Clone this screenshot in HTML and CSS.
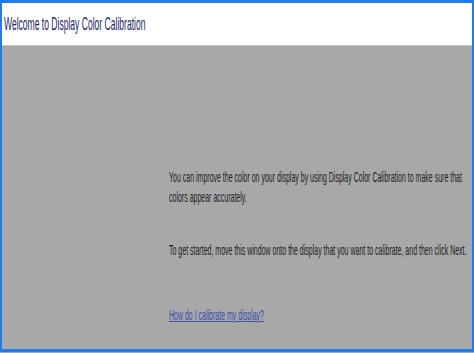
FILE: index.html
```html
<!DOCTYPE html>
<html>
<head>
<meta charset="utf-8">
<link rel="stylesheet" href="styles.css">
</head>
<body>
<div class="window">
  <div class="header">
    <div class="title">Welcome to Display Color Calibration</div>
  </div>
  <div class="content">
    <div class="para">
      <div class="line">You can improve the color on your display by using Display Color Calibration to make sure that</div>
      <div class="line">colors appear accurately.</div>
    </div>
    <div class="para second">
      <div class="line">To get started, move this window onto the display that you want to calibrate, and then click Next.</div>
    </div>
    <div class="para help">
      <a class="line link" href="#">How do I calibrate my display?</a>
    </div>
  </div>
</div>
</body>
</html>
```
FILE: styles.css
```css
html, body {
  margin: 0;
  padding: 0;
  background: #a8a8a8;
  overflow: hidden;
}
body {
  width: 474px;
  height: 353px;
  font-family: "Liberation Sans", Arial, sans-serif;
}
.window {
  width: 470px;
  height: 346px;
  border-style: solid;
  border-color: #1a7ef0;
  border-width: 3px 2px 3px 2px;
  background: #a8a8a8;
  display: flex;
  flex-direction: column;
}
.header {
  height: 42px;
  background: #ffffff;
  border-bottom: 1px solid #c4c4c4;
  flex-shrink: 0;
}
.title {
  margin-top: 11px;
  margin-left: 2px;
  font-size: 19px;
  line-height: 20px;
  color: #1c1f6a;
  white-space: nowrap;
  transform: scaleX(0.45);
  transform-origin: left center;
}
.content {
  padding-left: 167px;
  padding-top: 121px;
}
.para {
  display: flex;
  flex-direction: column;
}
.line {
  font-size: 15px;
  line-height: 20px;
  color: #1e1e1e;
  white-space: nowrap;
  transform: scaleX(0.467);
  transform-origin: left center;
}
.second {
  margin-top: 33px;
}
.help {
  margin-top: 45px;
}
.link {
  color: #3a4fa8;
  text-decoration: underline;
}
```
